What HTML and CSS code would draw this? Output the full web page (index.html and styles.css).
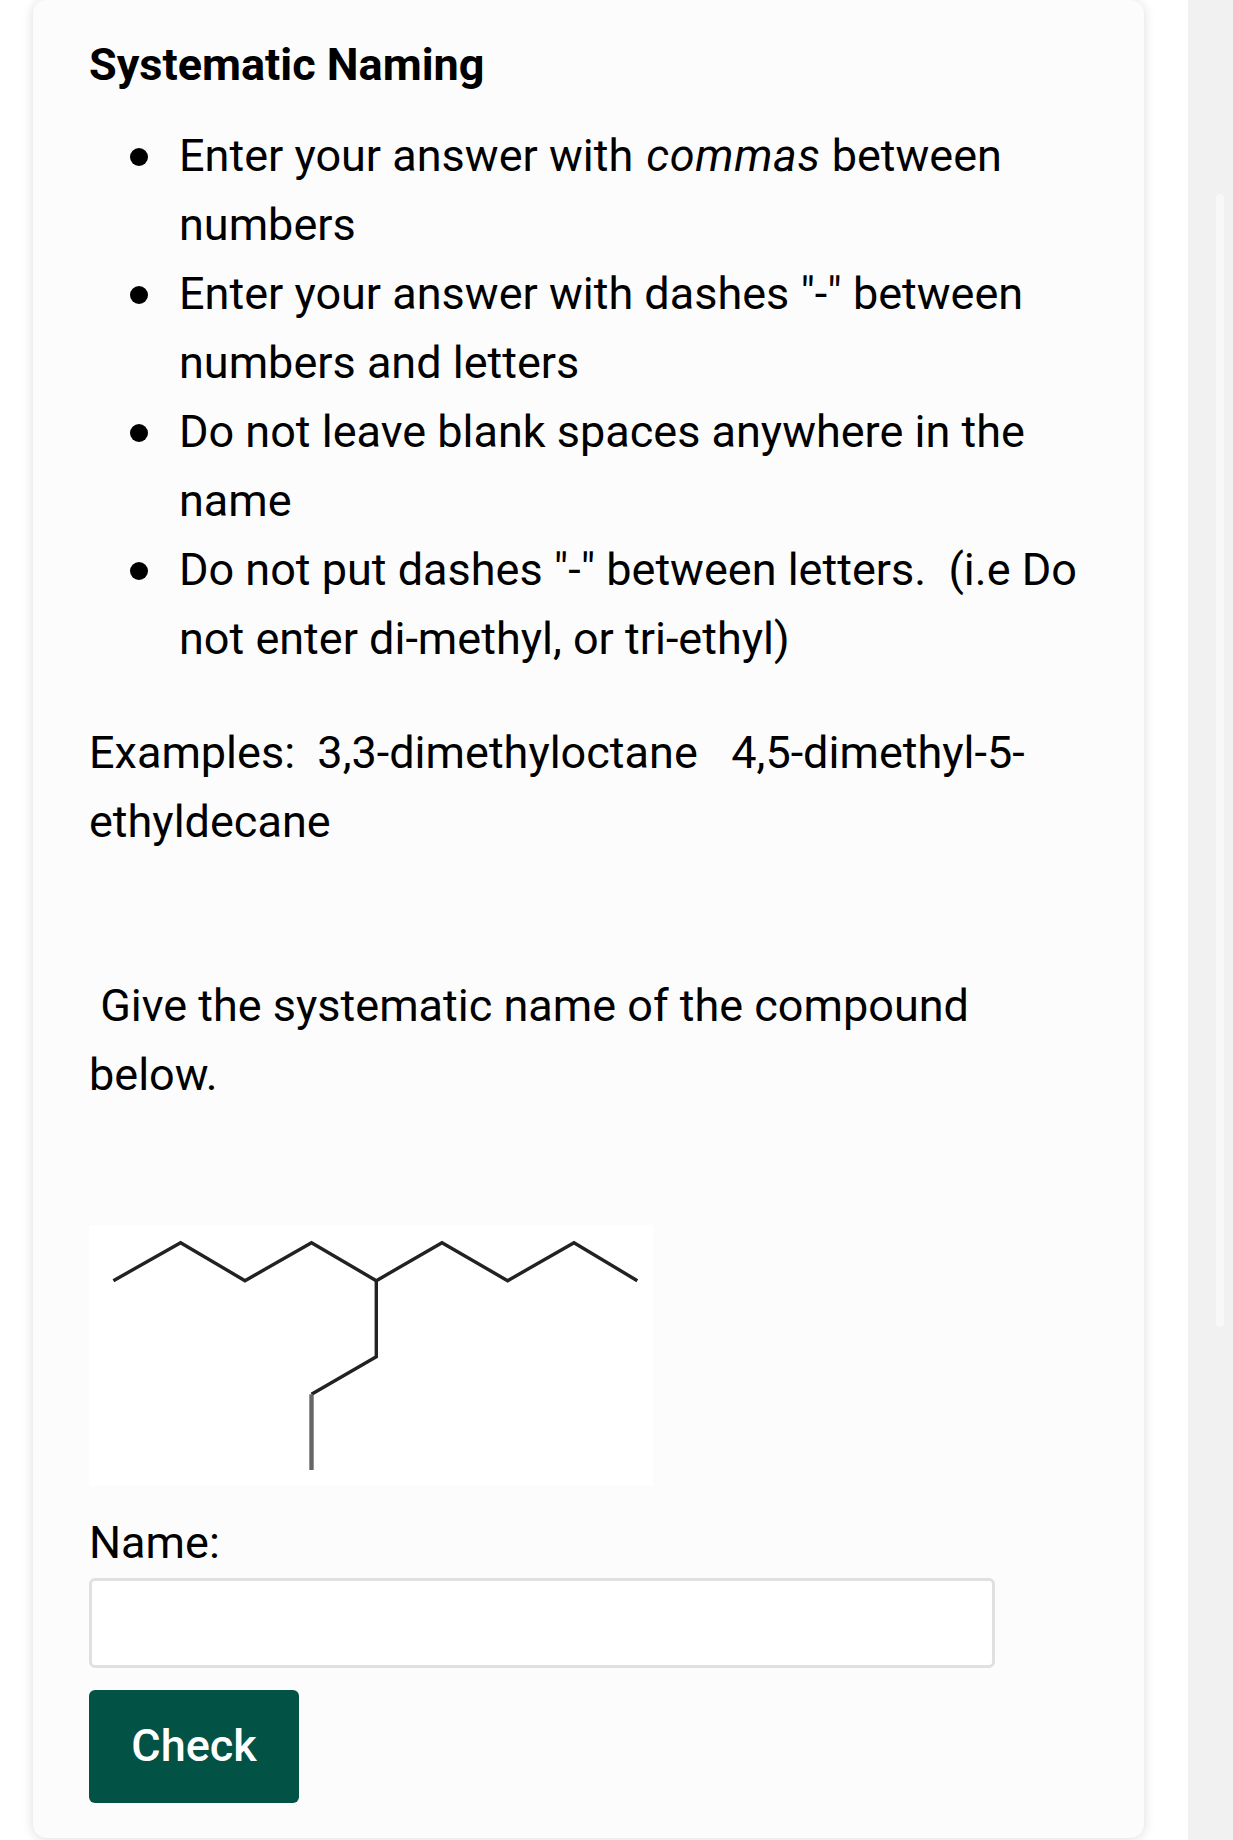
FILE: index.html
```html
<!DOCTYPE html>
<html lang="en">
<head>
    <meta charset="UTF-8">
    <meta name="viewport" content="width=device-width, initial-scale=1.0">
    <title>Systematic Naming</title>
    <link rel="stylesheet" href="styles.css">
</head>
<body>

<div class="page">
    <!-- question card -->
    <div class="card">
        <h4 class="title">Systematic Naming</h4>
        <ul class="rules">
            <li>Enter your answer with <em>commas</em> between numbers</li>
            <li>Enter your answer with dashes "-" between numbers and letters</li>
            <li>Do not leave blank spaces anywhere in the name</li>
            <li>Do not put dashes "-" between letters.&nbsp; (i.e Do not enter di-methyl, or tri-ethyl)</li>
        </ul>
        <p class="examples">Examples:&nbsp; 3,3-dimethyloctane&nbsp;&nbsp; 4,5-dimethyl-5-ethyldecane</p>
        <p class="prompt">&nbsp;Give the systematic name of the compound below.</p>

        <!-- compound -->
        <svg class="compound" viewBox="0 0 564 261" width="564" height="261" role="img" aria-label="Skeletal formula">
            <rect width="564" height="261" fill="#fff"/>
            <polyline class="bond" points="24.4,55.7 91.6,17.7 156,55.7 222.5,17.7 287.3,55.7 353,17.7 418.6,55.7 485,17.7 548.3,55.7"/>
            <polyline class="bond" points="287.3,55.7 287.3,131.7 222.5,169.3"/>
            <line class="bond-end" x1="222.5" y1="169.3" x2="222.5" y2="245"/>
        </svg>

        <label class="name-label" for="name">Name:</label>
        <input class="name-input" id="name" type="text">
        <button class="check" type="button">Check</button>
    </div>

    <!-- scrollbar -->
    <div class="track">
        <div class="thumb"></div>
    </div>
</div>

</body>
</html>
```

FILE: styles.css
```css
body {
    margin: 0;
    background-color: #fff;
    color: #000;
    font-family: Roboto, "Liberation Sans", sans-serif;
    font-size: 45px;
    line-height: 69px;
}
.page {
    display: flex;
    height: 1840px;
    overflow: hidden;
}
.card {
    box-sizing: border-box;
    width: 1111px;
    height: 1838px;
    margin-left: 33px;
    margin-right: 44px;
    padding: 30px 56px 0 56px;
    background-color: #fcfcfc;
    border-radius: 14px;
    box-shadow: 0 1px 12px rgba(0, 0, 0, 0.14);
}
.title {
    margin: 0;
    font-size: 45px;
    font-weight: 700;
}
.rules {
    margin: 22px 0 0 0;
    padding-left: 90px;
    list-style: none;
}
.rules li {
    position: relative;
}
.rules li::before {
    content: "";
    position: absolute;
    top: 27px;
    left: -49px;
    width: 18px;
    height: 18px;
    background-color: #000;
    border-radius: 50%;
}
.rules em {
    margin-left: 2px;
    letter-spacing: 0.6px;
}
.examples {
    margin: 45px 0 0 0;
}
.prompt {
    margin: 115px 0 0 0;
}
.compound {
    display: block;
    margin-top: 116px;
    filter: blur(0.6px);
}
.bond {
    fill: none;
    stroke: #222;
    stroke-width: 3.4;
}
.bond-end {
    stroke: #666;
    stroke-width: 4.4;
}
.name-label {
    display: block;
    margin-top: 22px;
}
.name-input {
    display: block;
    box-sizing: border-box;
    width: 906px;
    height: 90px;
    margin-top: 1px;
    background-color: #fff;
    border: 3px solid #e0e0e0;
    border-radius: 6px;
}
.check {
    display: block;
    width: 210px;
    height: 113px;
    margin-top: 22px;
    padding: 0 0 2px 0;
    background-color: #025246;
    color: #fff;
    font-family: inherit;
    font-size: 45px;
    font-weight: 500;
    border: none;
    border-radius: 6px;
}
.track {
    position: relative;
    flex: 1;
    background-color: #f1f1f1;
}
.thumb {
    position: absolute;
    top: 194px;
    left: 28px;
    width: 8px;
    height: 1133px;
    background-color: #f8f8f8;
    border-radius: 4px;
}
```
